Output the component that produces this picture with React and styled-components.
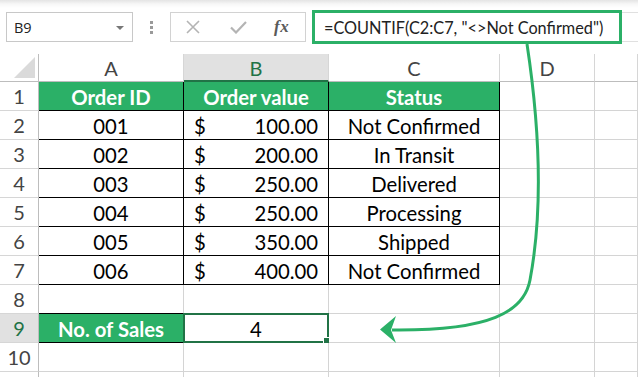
import React from "react";
import styled, { createGlobalStyle } from "styled-components";

const GREEN = "#2bb067";
const DARK_GREEN = "#217346";
const GRID = "#d4d4d4";
const HEAD_LINE = "#bdbdbd";
const CELL_FONT = `"Lato", "Liberation Sans", sans-serif`;

const Global = createGlobalStyle`
  html, body { margin: 0; padding: 0; background: #fff; }
  * { box-sizing: border-box; }
`;

const Page = styled.div`
  position: relative;
  width: 638px;
  height: 377px;
  overflow: hidden;
  background: #fff;
  font-family: ${CELL_FONT};
`;

const TopBar = styled.div`
  height: 54px;
  display: flex;
  align-items: flex-start;
  padding: 10px 0 0 6px;
  background: linear-gradient(#e4e4e4 0px, #f7f7f7 4px, #ffffff 8px);
`;

const NameBox = styled.div`
  margin-top: 2px;
  width: 127px;
  height: 30px;
  border: 1px solid #c8c8c8;
  background: #fff;
  display: flex;
  align-items: center;
  justify-content: space-between;
  padding: 0 8px 0 7px;
  font-family: "Open Sans", "Noto Sans", sans-serif;
  font-size: 14.5px;
  color: #222;
`;

const Caret = styled.span`
  width: 0;
  height: 0;
  border-left: 4px solid transparent;
  border-right: 4px solid transparent;
  border-top: 4px solid #777;
  margin-top: 1px;
`;

const Grip = styled.div`
  width: 37px;
  height: 34px;
  display: flex;
  flex-direction: column;
  align-items: center;
  justify-content: center;
  gap: 2px;
  & > span {
    width: 3px;
    height: 3px;
    background: #9a9a9a;
  }
`;

const ButtonBox = styled.div`
  margin-top: 2px;
  width: 136px;
  height: 30px;
  border: 1px solid #d2d2d2;
  display: flex;
  align-items: center;
  padding-left: 15px;
`;

const IconSlot = styled.span`
  width: ${(p) => p.$w}px;
  display: flex;
  align-items: center;
  justify-content: flex-start;
`;

const Fx = styled.span`
  font-family: "Liberation Serif", "DejaVu Serif", serif;
  font-style: italic;
  font-weight: bold;
  font-size: 17px;
  color: #5a5a5a;
  letter-spacing: 0.5px;
`;

const FormulaBar = styled.div`
  flex: 1;
  display: flex;
  align-items: flex-start;
  margin-left: 6px;
`;

const FormulaInput = styled.div`
  width: 310px;
  height: 34px;
  border: 3px solid ${GREEN};
  display: flex;
  align-items: center;
  padding-left: 9px;
  font-family: ${CELL_FONT};
  font-size: 16.3px;
  color: #222;
  background: #fff;
  white-space: nowrap;
`;

const FormulaRest = styled.div`
  flex: 1;
  margin-top: 2px;
  height: 30px;
  border-top: 1px solid #e0e0e0;
  border-bottom: 1px solid #e0e0e0;
`;

const Sheet = styled.div`
  display: grid;
  grid-template-columns: 39px 145px 145px 171px 95px 1fr;
  grid-template-rows: 28px;
  grid-auto-rows: 29px;
`;

const Corner = styled.div`
  border-right: 1px solid ${HEAD_LINE};
  border-bottom: 1px solid ${HEAD_LINE};
  display: flex;
  align-items: flex-end;
  justify-content: flex-end;
  padding: 0 3px 3px 0;
`;

const ColHead = styled.div`
  display: flex;
  align-items: center;
  justify-content: center;
  font-size: 20px;
  color: ${(p) => (p.$active ? DARK_GREEN : "#444")};
  background: ${(p) => (p.$active ? "#e1e1e1" : "#fff")};
  border-right: 1px solid #d6d6d6;
  border-bottom: ${(p) => (p.$active ? `2px solid ${DARK_GREEN}` : `1px solid ${HEAD_LINE}`)};
  padding-top: ${(p) => (p.$active ? "1px" : "0")};
`;

const RowHead = styled.div`
  display: flex;
  align-items: center;
  justify-content: center;
  font-size: 20px;
  color: ${(p) => (p.$active ? DARK_GREEN : "#444")};
  background: ${(p) => (p.$active ? "#e1e1e1" : "#fff")};
  border-right: 1px solid ${HEAD_LINE};
  border-bottom: 1px solid #d6d6d6;
`;

const Cell = styled.div`
  position: relative;
  display: flex;
  align-items: center;
  justify-content: ${(p) => p.$align || "center"};
  padding: 1px 10px 0;
  font-size: 20.3px;
  color: ${(p) => (p.$head ? "#fff" : "#000")};
  font-weight: ${(p) => (p.$head ? 700 : 400)};
  background: ${(p) => (p.$head ? GREEN : "#fff")};
  border-right: 1px solid ${(p) => p.$right || GRID};
  border-bottom: 1px solid ${(p) => p.$bottom || GRID};
  white-space: nowrap;
`;

const Selection = styled.span`
  position: absolute;
  inset: -1px;
  border: 2px solid ${DARK_GREEN};
  pointer-events: none;
  &::after {
    content: "";
    position: absolute;
    right: -4px;
    bottom: -4px;
    width: 6px;
    height: 6px;
    background: ${DARK_GREEN};
    border: 1px solid #fff;
  }
`;

const Overlay = styled.svg`
  position: absolute;
  left: 0;
  top: 0;
  pointer-events: none;
`;

const rows = [
  ["001", "100.00", "Not Confirmed"],
  ["002", "200.00", "In Transit"],
  ["003", "250.00", "Delivered"],
  ["004", "250.00", "Processing"],
  ["005", "350.00", "Shipped"],
  ["006", "400.00", "Not Confirmed"],
];

const BLACK = "#000";

function Empty({ n, bottom }) {
  return Array.from({ length: n }).map((_, i) => <Cell key={i} $bottom={bottom} />);
}

export default function App() {
  return (
    <Page>
      <Global />
      <TopBar>
        <NameBox>
          <span>B9</span>
          <Caret />
        </NameBox>
        <Grip>
          <span />
          <span />
          <span />
        </Grip>
        <ButtonBox>
          <IconSlot $w={44}>
            <svg width="14" height="14" viewBox="0 0 14 14">
              <path d="M1 1 L13 13 M13 1 L1 13" stroke="#b4b4b4" strokeWidth="1.6" fill="none" />
            </svg>
          </IconSlot>
          <IconSlot $w={44}>
            <svg width="17" height="13" viewBox="0 0 17 13">
              <path d="M1 6.5 L6 11.5 L16 1" stroke="#b4b4b4" strokeWidth="2.2" fill="none" />
            </svg>
          </IconSlot>
          <IconSlot $w={30}>
            <Fx>fx</Fx>
          </IconSlot>
        </ButtonBox>
        <FormulaBar>
          <FormulaInput>=COUNTIF(C2:C7, "&lt;&gt;Not Confirmed")</FormulaInput>
          <FormulaRest />
        </FormulaBar>
      </TopBar>

      <Sheet>
        <Corner>
          <svg width="21" height="21" viewBox="0 0 21 21">
            <polygon points="21,0 21,21 0,21" fill="#dadada" />
          </svg>
        </Corner>
        <ColHead>A</ColHead>
        <ColHead $active>B</ColHead>
        <ColHead>C</ColHead>
        <ColHead>D</ColHead>
        <ColHead />

        <RowHead>1</RowHead>
        <Cell $head $right={BLACK} $bottom={BLACK}>Order ID</Cell>
        <Cell $head $right={BLACK} $bottom={BLACK}>Order value</Cell>
        <Cell $head $right={BLACK} $bottom={BLACK}>Status</Cell>
        <Empty n={2} />

        {rows.map(([id, val, status], i) => (
          <React.Fragment key={id}>
            <RowHead>{i + 2}</RowHead>
            <Cell $right={BLACK} $bottom={BLACK}>{id}</Cell>
            <Cell $align="space-between" $right={BLACK} $bottom={BLACK}>
              <span>$</span>
              <span>{val}</span>
            </Cell>
            <Cell $right={BLACK} $bottom={BLACK}>{status}</Cell>
            <Empty n={2} />
          </React.Fragment>
        ))}

        <RowHead>8</RowHead>
        <Cell $bottom={BLACK} />
        <Empty n={4} />

        <RowHead $active>9</RowHead>
        <Cell $head $right={BLACK} $bottom={BLACK}>No. of Sales</Cell>
        <Cell>
          4
          <Selection />
        </Cell>
        <Empty n={3} />

        <RowHead>10</RowHead>
        <Empty n={5} />

        <RowHead />
        <Empty n={5} />
      </Sheet>

      <Overlay width="638" height="377" viewBox="0 0 638 377">
        <path
          d="M527 44 C537 110, 545 200, 530 280 C524 312, 490 331, 392 330"
          stroke={GREEN}
          strokeWidth="3"
          fill="none"
        />
        <polygon points="380,329.5 396,316 391,330 396,343" fill={GREEN} />
      </Overlay>
    </Page>
  );
}
